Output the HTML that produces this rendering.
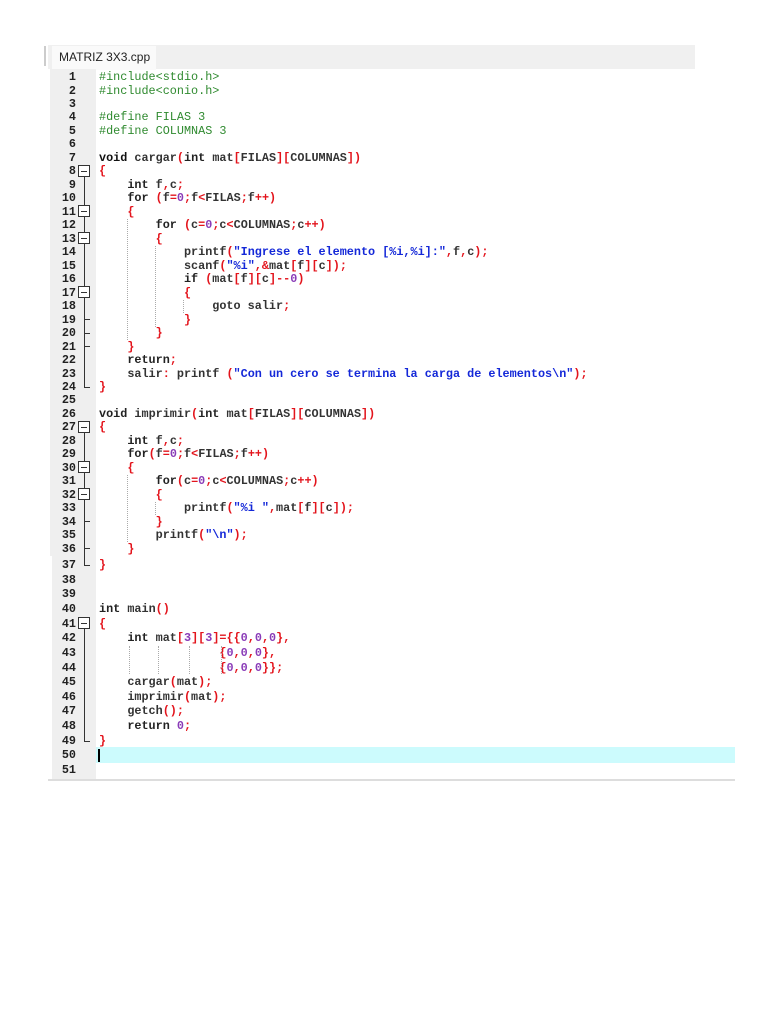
<!DOCTYPE html>
<html><head><meta charset="utf-8"><style>
body{margin:0;width:768px;height:1024px;background:#fff;position:relative;overflow:hidden;font-family:"Liberation Mono",monospace;}
.tabbar{position:absolute;left:48px;top:45px;width:647px;height:24px;background:#f0f0f0;}
.tab{position:absolute;left:52px;top:46px;width:104px;height:24px;background:#fafafa;font:12px "Liberation Sans",sans-serif;color:#222;line-height:22px;padding-left:7px;box-sizing:border-box;}
.lb{position:absolute;left:44px;top:46px;width:2px;height:20px;background:#ccc;}
.g1{position:absolute;left:50px;top:69px;width:46px;height:487px;background:#efefef;}
.g2{position:absolute;left:52px;top:556px;width:44px;height:224px;background:#efefef;}
.bot{position:absolute;left:48px;top:779px;width:687px;height:2px;background:#ddd;}
.hl{position:absolute;left:96px;top:747px;width:639px;height:16px;background:#ccfbfd;}
.cur{position:absolute;left:98px;top:749px;width:2px;height:13px;background:#000;}
.l{position:absolute;left:0;height:14px;line-height:14px;font-size:11.8px;white-space:pre;font-weight:bold;color:#222;}
.n{position:absolute;left:54px;width:22px;text-align:right;}
.c{position:absolute;left:99px;}
.k{color:#111;font-weight:bold}
.t{font-weight:bold;color:#333}
.p{color:#e3141c}
.m{color:#8a3cb8}
.s{color:#1428d8}
.g{color:#2f8a2f;font-weight:normal}
.box{position:absolute;left:78px;width:12px;height:12px;border:1px solid #333;background:#fff;box-sizing:border-box;margin-top:-1px;}
.box:after{content:"";position:absolute;left:2px;top:5px;width:6px;height:1px;background:#333;}
.v{position:absolute;left:84px;width:1px;background:#333;}
.tk{position:absolute;left:84px;width:6px;height:1px;background:#333;}
.d{position:absolute;width:0;border-left:1px dotted #aaa;}
</style></head><body>
<div class="lb"></div>
<div class="tabbar"></div>
<div class="tab">MATRIZ 3X3.cpp</div>
<div class="g1"></div><div class="g2"></div><div class="bot"></div>
<div class="hl"></div><div class="cur"></div>

<div class="l" style="top:70px"><span class="n">1</span><span class="c g">#include&lt;stdio.h&gt;</span></div>
<div class="l" style="top:83.5px"><span class="n">2</span><span class="c g">#include&lt;conio.h&gt;</span></div>
<div class="l" style="top:97px"><span class="n">3</span></div>
<div class="l" style="top:110.4px"><span class="n">4</span><span class="c g">#define FILAS 3</span></div>
<div class="l" style="top:123.9px"><span class="n">5</span><span class="c g">#define COLUMNAS 3</span></div>
<div class="l" style="top:137.4px"><span class="n">6</span></div>
<div class="l" style="top:150.9px"><span class="n">7</span><span class="c"><span class="k">void</span><span class="t"> cargar</span><span class="p">(</span>int<span class="t"> mat</span><span class="p">[</span><span class="t">FILAS</span><span class="p">][</span><span class="t">COLUMNAS</span><span class="p">])</span></span></div>
<div class="l" style="top:164.4px"><span class="n">8</span><span class="c p">{</span></div>
<div class="l" style="top:177.8px"><span class="n">9</span><span class="c">    int<span class="t"> f</span><span class="p">,</span><span class="t">c</span><span class="p">;</span></span></div>
<div class="l" style="top:191.3px"><span class="n">10</span><span class="c">    for <span class="p">(</span><span class="t">f</span><span class="p">=</span><span class="m">0</span><span class="p">;</span><span class="t">f</span><span class="p">&lt;</span><span class="t">FILAS</span><span class="p">;</span><span class="t">f</span><span class="p">++)</span></span></div>
<div class="l" style="top:204.8px"><span class="n">11</span><span class="c p">    {</span></div>
<div class="l" style="top:218.2px"><span class="n">12</span><span class="c">        for <span class="p">(</span><span class="t">c</span><span class="p">=</span><span class="m">0</span><span class="p">;</span><span class="t">c</span><span class="p">&lt;</span><span class="t">COLUMNAS</span><span class="p">;</span><span class="t">c</span><span class="p">++)</span></span></div>
<div class="l" style="top:231.8px"><span class="n">13</span><span class="c p">        {</span></div>
<div class="l" style="top:245.2px"><span class="n">14</span><span class="c"><span class="t">            printf</span><span class="p">(</span><span class="s">"Ingrese el elemento [%i,%i]:"</span><span class="p">,</span><span class="t">f</span><span class="p">,</span><span class="t">c</span><span class="p">);</span></span></div>
<div class="l" style="top:258.7px"><span class="n">15</span><span class="c"><span class="t">            scanf</span><span class="p">(</span><span class="s">"%i"</span><span class="p">,&amp;</span><span class="t">mat</span><span class="p">[</span><span class="t">f</span><span class="p">][</span><span class="t">c</span><span class="p">]);</span></span></div>
<div class="l" style="top:272.2px"><span class="n">16</span><span class="c">            if <span class="p">(</span><span class="t">mat</span><span class="p">[</span><span class="t">f</span><span class="p">][</span><span class="t">c</span><span class="p">]--</span><span class="m">0</span><span class="p">)</span></span></div>
<div class="l" style="top:285.6px"><span class="n">17</span><span class="c p">            {</span></div>
<div class="l" style="top:299.1px"><span class="n">18</span><span class="c"><span class="t">                goto salir</span><span class="p">;</span></span></div>
<div class="l" style="top:312.6px"><span class="n">19</span><span class="c p">            }</span></div>
<div class="l" style="top:326px"><span class="n">20</span><span class="c p">        }</span></div>
<div class="l" style="top:339.5px"><span class="n">21</span><span class="c p">    }</span></div>
<div class="l" style="top:353px"><span class="n">22</span><span class="c">    return<span class="p">;</span></span></div>
<div class="l" style="top:366.5px"><span class="n">23</span><span class="c"><span class="t">    salir</span><span class="p">:</span><span class="t"> printf </span><span class="p">(</span><span class="s">"Con un cero se termina la carga de elementos\n"</span><span class="p">);</span></span></div>
<div class="l" style="top:380px"><span class="n">24</span><span class="c p">}</span></div>
<div class="l" style="top:393.4px"><span class="n">25</span></div>
<div class="l" style="top:406.9px"><span class="n">26</span><span class="c">void<span class="t"> imprimir</span><span class="p">(</span>int<span class="t"> mat</span><span class="p">[</span><span class="t">FILAS</span><span class="p">][</span><span class="t">COLUMNAS</span><span class="p">])</span></span></div>
<div class="l" style="top:420.4px"><span class="n">27</span><span class="c p">{</span></div>
<div class="l" style="top:433.8px"><span class="n">28</span><span class="c">    int<span class="t"> f</span><span class="p">,</span><span class="t">c</span><span class="p">;</span></span></div>
<div class="l" style="top:447.3px"><span class="n">29</span><span class="c">    for<span class="p">(</span><span class="t">f</span><span class="p">=</span><span class="m">0</span><span class="p">;</span><span class="t">f</span><span class="p">&lt;</span><span class="t">FILAS</span><span class="p">;</span><span class="t">f</span><span class="p">++)</span></span></div>
<div class="l" style="top:460.8px"><span class="n">30</span><span class="c p">    {</span></div>
<div class="l" style="top:474.2px"><span class="n">31</span><span class="c">        for<span class="p">(</span><span class="t">c</span><span class="p">=</span><span class="m">0</span><span class="p">;</span><span class="t">c</span><span class="p">&lt;</span><span class="t">COLUMNAS</span><span class="p">;</span><span class="t">c</span><span class="p">++)</span></span></div>
<div class="l" style="top:487.7px"><span class="n">32</span><span class="c p">        {</span></div>
<div class="l" style="top:501.2px"><span class="n">33</span><span class="c"><span class="t">            printf</span><span class="p">(</span><span class="s">"%i "</span><span class="p">,</span><span class="t">mat</span><span class="p">[</span><span class="t">f</span><span class="p">][</span><span class="t">c</span><span class="p">]);</span></span></div>
<div class="l" style="top:514.6px"><span class="n">34</span><span class="c p">        }</span></div>
<div class="l" style="top:528.1px"><span class="n">35</span><span class="c"><span class="t">        printf</span><span class="p">(</span><span class="s">"\n"</span><span class="p">);</span></span></div>
<div class="l" style="top:541.6px"><span class="n">36</span><span class="c p">    }</span></div>

<div class="l" style="top:558px"><span class="n">37</span><span class="c p">}</span></div>
<div class="l" style="top:572.6px"><span class="n">38</span></div>
<div class="l" style="top:587.3px"><span class="n">39</span></div>
<div class="l" style="top:601.9px"><span class="n">40</span><span class="c">int<span class="t"> main</span><span class="p">()</span></span></div>
<div class="l" style="top:616.6px"><span class="n">41</span><span class="c p">{</span></div>
<div class="l" style="top:631.2px"><span class="n">42</span><span class="c">    int<span class="t"> mat</span><span class="p">[</span><span class="m">3</span><span class="p">][</span><span class="m">3</span><span class="p">]={{</span><span class="m">0</span><span class="p">,</span><span class="m">0</span><span class="p">,</span><span class="m">0</span><span class="p">},</span></span></div>
<div class="l" style="top:645.8px"><span class="n">43</span><span class="c">                 <span class="p">{</span><span class="m">0</span><span class="p">,</span><span class="m">0</span><span class="p">,</span><span class="m">0</span><span class="p">},</span></span></div>
<div class="l" style="top:660.5px"><span class="n">44</span><span class="c">                 <span class="p">{</span><span class="m">0</span><span class="p">,</span><span class="m">0</span><span class="p">,</span><span class="m">0</span><span class="p">}};</span></span></div>
<div class="l" style="top:675.1px"><span class="n">45</span><span class="c"><span class="t">    cargar</span><span class="p">(</span><span class="t">mat</span><span class="p">);</span></span></div>
<div class="l" style="top:689.8px"><span class="n">46</span><span class="c"><span class="t">    imprimir</span><span class="p">(</span><span class="t">mat</span><span class="p">);</span></span></div>
<div class="l" style="top:704.4px"><span class="n">47</span><span class="c"><span class="t">    getch</span><span class="p">();</span></span></div>
<div class="l" style="top:719px"><span class="n">48</span><span class="c">    return <span class="m">0</span><span class="p">;</span></span></div>
<div class="l" style="top:733.7px"><span class="n">49</span><span class="c p">}</span></div>
<div class="l" style="top:748.3px"><span class="n">50</span></div>
<div class="l" style="top:763px"><span class="n">51</span></div>

<div class="v" style="top:176px;height:212px"></div><div class="tk" style="top:387px"></div>
<div class="tk" style="top:319px"></div><div class="tk" style="top:333px"></div><div class="tk" style="top:346px"></div>
<div class="box" style="top:166px"></div>
<div class="box" style="top:206px"></div>
<div class="box" style="top:233px"></div>
<div class="box" style="top:287px"></div>
<div class="v" style="top:432px;height:133px"></div><div class="tk" style="top:565px"></div>
<div class="tk" style="top:521px"></div><div class="tk" style="top:548px"></div>
<div class="box" style="top:422px"></div>
<div class="box" style="top:462px"></div>
<div class="box" style="top:489px"></div>
<div class="v" style="top:628px;height:113px"></div><div class="tk" style="top:741px"></div>
<div class="box" style="top:618px"></div>

<div class="d" style="left:127px;top:219px;height:121px"></div>
<div class="d" style="left:155px;top:246px;height:81px"></div>
<div class="d" style="left:183px;top:300px;height:13px"></div>
<div class="d" style="left:127px;top:475px;height:67px"></div>
<div class="d" style="left:155px;top:502px;height:13px"></div>
<div class="d" style="left:129px;top:646px;height:28px"></div>
<div class="d" style="left:158px;top:646px;height:28px"></div>
<div class="d" style="left:189px;top:646px;height:28px"></div>
<div class="d" style="left:221px;top:646px;height:28px"></div>
</body></html>
